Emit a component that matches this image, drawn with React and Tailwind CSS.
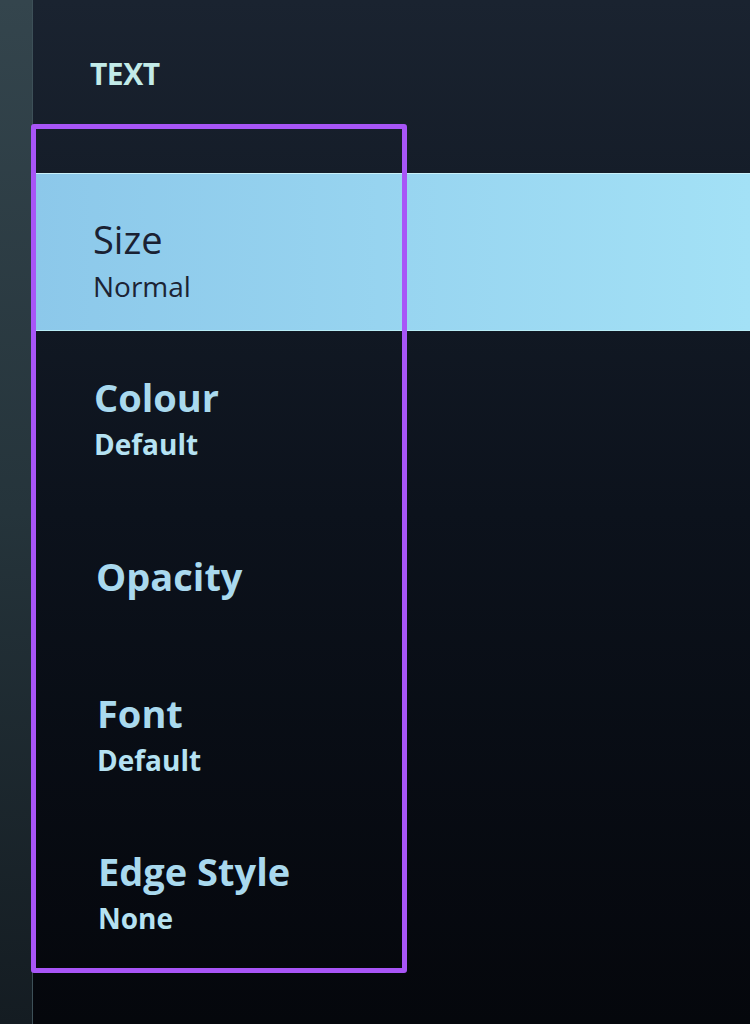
import React from "react";

const rows = [
  { label: "Size", sub: "Normal", selected: true, pad: "pl-[60px]" },
  { label: "Colour", sub: "Default", pad: "pl-[61px]" },
  { label: "Opacity", pad: "pl-[63px]" },
  { label: "Font", sub: "Default", pad: "pl-[64px]" },
  { label: "Edge Style", sub: "None", pad: "pl-[65px]" },
];

export default function App() {
  return (
    <div
      className="relative w-[750px] h-[1024px] overflow-hidden flex bg-[#06090f]"
      style={{ fontFamily: '"Open Sans", "Noto Sans", sans-serif' }}
    >
      <div className="w-[33px] shrink-0 bg-gradient-to-b from-[#34454d] via-[#25343b] to-[#141c22] border-r border-[#3d5058]" />
      <div className="flex-1 flex flex-col bg-gradient-to-b from-[#1a2330] via-[#0c121c] to-[#05070c]">
        <div className="pt-[56px] pl-[57px] text-[30px] leading-[36px] font-bold text-[#c2ebe8] tracking-[-0.5px]">
          TEXT
        </div>
        <div className="mt-[81px] flex flex-col">
          {rows.map((r) => (
            <div
              key={r.label}
              className={
                "h-[158px] flex flex-col justify-center pt-[15px] " +
                r.pad +
                " " +
                (r.selected
                  ? "bg-gradient-to-r from-[#8cc8ea] to-[#a3e1f6] border-t border-[#c9f1fa] border-b border-b-[#b8ecf6]"
                  : "")
              }
            >
              <div
                className={
                  "text-[38px] leading-[44px] " +
                  (r.selected ? "font-medium text-[#1a2132]" : "font-bold text-[#a9d9ee]")
                }
              >
                {r.label}
              </div>
              {r.sub && (
                <div
                  className={
                    "mt-2 text-[28px] leading-[34px] " +
                    (r.selected ? "font-normal text-[#1c2334]" : "font-bold text-[#b5e2f2]")
                  }
                >
                  {r.sub}
                </div>
              )}
            </div>
          ))}
        </div>
      </div>
      <div className="absolute left-[31px] top-[124px] w-[376px] h-[849px] border-[5px] border-[#a855f7] rounded-[3px] pointer-events-none" />
    </div>
  );
}
